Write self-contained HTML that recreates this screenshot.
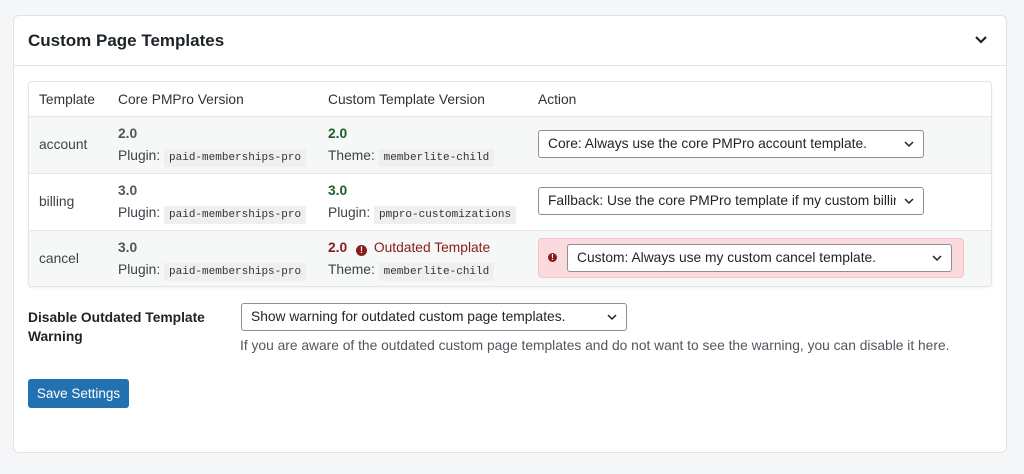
<!DOCTYPE html>
<html><head><meta charset="utf-8"><style>
*{box-sizing:border-box;margin:0;padding:0}
body{width:1024px;height:474px;background:#f5f6f8;font-family:"Liberation Sans",sans-serif;color:#1d2327;font-size:13.8px;position:relative;overflow:hidden}
.a{position:absolute;white-space:nowrap}
.card{position:absolute;left:13px;top:15px;width:994px;height:438px;background:#fff;border:1px solid #e0e2e6;border-radius:6px}
.hdr{position:absolute;left:13px;top:65px;width:994px;height:1px;background:#e2e4e7}
.tbl{position:absolute;left:28px;top:81px;width:964px;height:206px;border:1px solid #e2e4e7;border-radius:4px;overflow:hidden;box-shadow:0 1px 2px rgba(0,0,0,.06)}
.row{position:absolute;left:0;width:964px;height:57px;border-top:1px solid #e4e6e9}
code{font-family:"Liberation Mono",monospace;font-size:11px;background:#eeeff1;padding:3px 5px;color:#333}
.sel{position:absolute;height:28px;border:1px solid #8c8f94;border-radius:3px;background:#fff;font-size:13.8px;padding:5px 9px;white-space:nowrap;color:#1d2327}
.sel span{display:block;overflow:hidden;width:calc(100% - 18px)}
.sel svg{position:absolute;right:8px;top:9px}
.g{color:#1e5e2a;font-weight:bold}
.r{color:#8a1b1b;font-weight:bold}
.v{font-weight:bold;color:#50575e}
.l{color:#3c434a}
</style></head><body>
<div class="card"></div>
<div class="hdr"></div>
<div class="a" style="left:28px;top:31px;font-size:17px;font-weight:bold;color:#1d2327">Custom Page Templates</div>
<svg class="a" style="left:974px;top:35px" width="14" height="10" viewBox="0 0 14 10"><path d="M2 2l5 5 5-5" fill="none" stroke="#1d2327" stroke-width="2.2"/></svg>
<div class="tbl">
 <div class="a" style="left:10px;top:10px;color:#2c3338">Template</div>
 <div class="a" style="left:89px;top:10px;color:#2c3338">Core PMPro Version</div>
 <div class="a" style="left:299px;top:10px;color:#2c3338">Custom Template Version</div>
 <div class="a" style="left:509px;top:10px;color:#2c3338">Action</div>
 <div class="row" style="top:34px;background:#f6f7f7"></div>
 <div class="row" style="top:91px;background:#fff"></div>
 <div class="row" style="top:148px;background:#f6f7f7;height:58px"></div>
</div>
<!-- row1 -->
<div class="a l" style="left:39px;top:137px">account</div>
<div class="a v" style="left:118px;top:126px">2.0</div>
<div class="a l" style="left:118px;top:148px">Plugin: <code>paid-memberships-pro</code></div>
<div class="a g" style="left:328px;top:126px">2.0</div>
<div class="a l" style="left:328px;top:148px">Theme: <code>memberlite-child</code></div>
<div class="sel" style="left:538px;top:130px;width:386px"><span>Core: Always use the core PMPro account template.</span><svg width="12" height="8" viewBox="0 0 12 8"><path d="M2 2l4 4 4-4" fill="none" stroke="#1d2327" stroke-width="1.5"/></svg></div>
<!-- row2 -->
<div class="a l" style="left:39px;top:194px">billing</div>
<div class="a v" style="left:118px;top:183px">3.0</div>
<div class="a l" style="left:118px;top:205px">Plugin: <code>paid-memberships-pro</code></div>
<div class="a g" style="left:328px;top:183px">3.0</div>
<div class="a l" style="left:328px;top:205px">Plugin: <code>pmpro-customizations</code></div>
<div class="sel" style="left:538px;top:187px;width:386px"><span>Fallback: Use the core PMPro template if my custom billing template is missing.</span><svg width="12" height="8" viewBox="0 0 12 8"><path d="M2 2l4 4 4-4" fill="none" stroke="#1d2327" stroke-width="1.5"/></svg></div>
<!-- row3 -->
<div class="a l" style="left:39px;top:251px">cancel</div>
<div class="a v" style="left:118px;top:240px">3.0</div>
<div class="a l" style="left:118px;top:262px">Plugin: <code>paid-memberships-pro</code></div>
<div class="a r" style="left:328px;top:240px">2.0 <span style="display:inline-block;width:11px;height:11px;border-radius:50%;background:#8a1b1b;color:#fff;font-size:9px;text-align:center;line-height:11px;margin:0 3px 0 5px;vertical-align:-1px">!</span> <span style="font-weight:normal;color:#8a1b1b">Outdated Template</span></div>
<div class="a l" style="left:328px;top:262px">Theme: <code>memberlite-child</code></div>
<div class="a" style="left:538px;top:238px;width:426px;height:40px;background:#fadadd;border:1px solid #f5c2c7;border-radius:4px"></div>
<div class="a" style="left:548px;top:253px;width:9px;height:9px;border-radius:50%;background:#8a1b1b;color:#fff;font-size:8px;text-align:center;line-height:9px;font-weight:bold">!</div>
<div class="sel" style="left:567px;top:244px;width:385px"><span>Custom: Always use my custom cancel template.</span><svg width="12" height="8" viewBox="0 0 12 8"><path d="M2 2l4 4 4-4" fill="none" stroke="#1d2327" stroke-width="1.5"/></svg></div>
<!-- disable -->
<div class="a" style="left:28px;top:308px;font-weight:bold;line-height:19px">Disable Outdated Template<br>Warning</div>
<div class="sel" style="left:241px;top:303px;width:386px"><span>Show warning for outdated custom page templates.</span><svg width="12" height="8" viewBox="0 0 12 8"><path d="M2 2l4 4 4-4" fill="none" stroke="#1d2327" stroke-width="1.5"/></svg></div>
<div class="a" style="left:240px;top:338px;color:#50575e">If you are aware of the outdated custom page templates and do not want to see the warning, you can disable it here.</div>
<div class="a" style="left:28px;top:379px;width:101px;height:29px;background:#2271b1;border-radius:3px;color:#fff;text-align:center;line-height:29px;font-size:13.5px">Save Settings</div>
</body></html>
